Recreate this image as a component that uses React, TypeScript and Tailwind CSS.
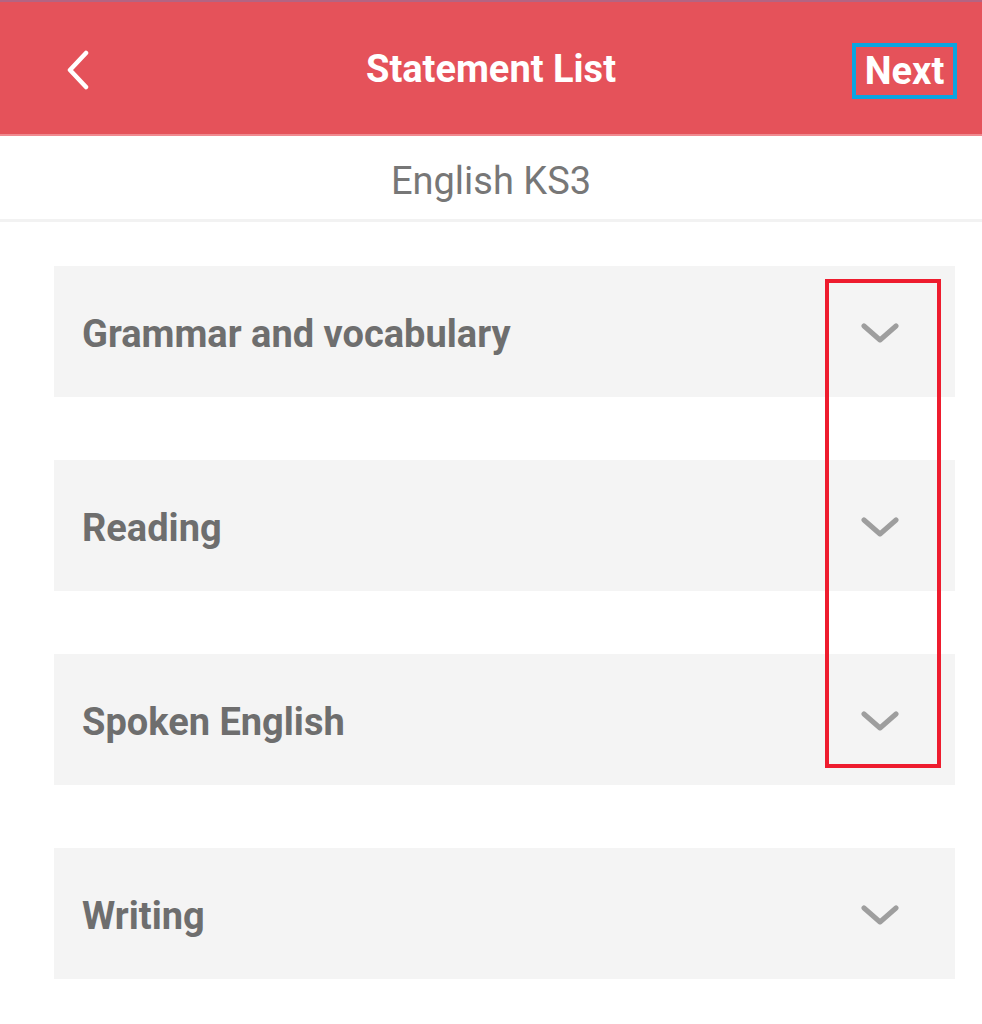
import React from "react";

const sections = ["Grammar and vocabulary", "Reading", "Spoken English", "Writing"];

function ChevronDown() {
  return (
    <svg width="38" height="24" viewBox="0 0 38 24" fill="none">
      <path d="M3 4 L19 18 L35 4" stroke="#9e9e9e" strokeWidth="5" strokeLinecap="round" strokeLinejoin="round" />
    </svg>
  );
}

function BackArrow() {
  return (
    <svg width="28" height="40" viewBox="0 0 28 40" fill="none">
      <path d="M22 3 L6 20 L22 37" stroke="#ffffff" strokeWidth="4.5" strokeLinecap="round" strokeLinejoin="round" />
    </svg>
  );
}

export default function App() {
  return (
    <div className="relative w-[982px] h-[1024px] bg-white overflow-hidden" style={{ fontFamily: "Roboto, 'Noto Sans', sans-serif" }}>
      {/* app bar */}
      <div className="h-[2px] bg-[#b46482]" />
      <header className="relative flex h-[134px] items-center justify-center bg-[#e5525a] border-b-2 border-[#f08a90]">
        <div className="absolute left-[64px] top-[48px]">
          <BackArrow />
        </div>
        <h1 className="mt-[2px] text-[38px] font-bold text-white">Statement List</h1>
        <span className="absolute left-[852px] top-[41px] flex h-[56px] w-[105px] items-center justify-center border-4 border-[#0aa5e0] text-[38px] font-bold text-white">
          Next
        </span>
      </header>

      {/* subject */}
      <div className="flex h-[86px] items-center justify-center border-b-[3px] border-[#f2f2f2]">
        <span className="mt-[8px] text-[38px] text-[#777777]">English KS3</span>
      </div>

      {/* sections */}
      <div className="flex flex-col gap-[63px] pt-[44px] pl-[54px] pr-[27px]">
        {sections.map((s) => (
          <div key={s} className="flex h-[131px] items-center justify-between bg-[#f4f4f4] pt-[5px] pl-[28px] pr-[56px]">
            <span className="text-[38px] font-bold text-[#6e6e6e]">{s}</span>
            <ChevronDown />
          </div>
        ))}
      </div>

      {/* highlight frame over the chevrons */}
      <div className="pointer-events-none absolute left-[825px] top-[279px] h-[489px] w-[116px] border-4 border-[#ee1c2e]" />
    </div>
  );
}
